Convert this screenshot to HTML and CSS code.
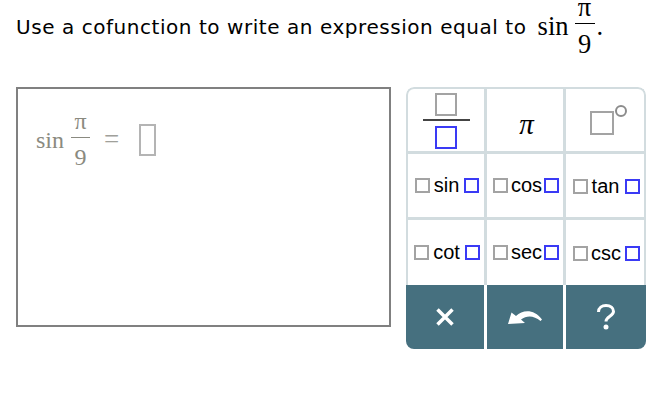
FILE: index.html
```html
<!DOCTYPE html>
<html lang="en">
<head>
    <meta charset="UTF-8">
    <title>Cofunction question</title>
    <link rel="stylesheet" href="styles.css">
</head>
<body>
    <div class="question">
        <span class="question-text">Use a cofunction to write an expression equal to</span>
        <span class="math math-question">
            <span class="fn">sin</span>
            <span class="frac">
                <span class="num">π</span>
                <span class="den">9</span>
            </span>
            <span class="dot">.</span>
        </span>
    </div>

    <div class="work">
        <div class="answer-box">
            <span class="math math-answer">
                <span class="fn">sin</span>
                <span class="frac">
                    <span class="num">π</span>
                    <span class="den">9</span>
                </span>
                <span class="equals">=</span>
                <span class="placeholder"></span>
            </span>
        </div>

        <div class="palette">
            <div class="keys">
                <button class="key">
                    <span class="key-frac">
                        <span class="box box-frac"></span>
                        <span class="key-bar"></span>
                        <span class="box box-frac blue"></span>
                    </span>
                </button>
                <button class="key key-pi">π</button>
                <button class="key">
                    <span class="key-degree">
                        <span class="box box-degree"></span>
                        <span class="degree-ring"></span>
                    </span>
                </button>

                <button class="key key-fn"><span class="box"></span><span class="fn-name spaced">sin</span><span class="box blue"></span></button>
                <button class="key key-fn"><span class="box"></span><span class="fn-name">cos</span><span class="box blue"></span></button>
                <button class="key key-fn low"><span class="box"></span><span class="fn-name wide">tan</span><span class="box blue"></span></button>

                <button class="key key-fn"><span class="box"></span><span class="fn-name spaced">cot</span><span class="box blue"></span></button>
                <button class="key key-fn"><span class="box"></span><span class="fn-name">sec</span><span class="box blue"></span></button>
                <button class="key key-fn low"><span class="box"></span><span class="fn-name roomy">csc</span><span class="box blue"></span></button>
            </div>

            <div class="actions">
                <button class="key-action" aria-label="Clear">
                    <svg width="20" height="20" viewBox="0 0 20 20"><path d="M2.500 2.500 L17.500 17.500 M17.500 2.500 L2.500 17.500" stroke="#fff" stroke-width="3.500" fill="none"/></svg>
                </button>
                <button class="key-action" aria-label="Undo">
                    <svg width="36" height="16" viewBox="0 0 36 16"><path d="M1 15 L4.500 3.500 L9 7 C16 0.500 27 0 35 10.500 L33.500 12 C27 6.500 20 6 14 10.500 L18 14 Z" fill="#fff"/></svg>
                </button>
                <button class="key-action" aria-label="Help">
                    <svg width="20" height="26" viewBox="0 0 20 26"><path d="M2.500 8 C2.500 3.500 6 1.500 10 1.500 C14.500 1.500 17.500 4 17.500 7.500 C17.500 12 10 12.500 10 17.500" stroke="#fff" stroke-width="3" fill="none"/><circle cx="10" cy="23" r="2.500" fill="#fff"/></svg>
                </button>
            </div>
        </div>
    </div>
</body>
</html>
```

FILE: styles.css
```css
* {
    margin: 0;
    padding: 0;
    box-sizing: border-box;
}

body {
    width: 663px;
    height: 417px;
    padding: 0 16px;
    background: white;
    color: #000;
    overflow: hidden;
}

.question {
    height: 87px;
    display: flex;
    align-items: flex-start;
    gap: 11px;
}

.question-text {
    font-family: "DejaVu Sans", Verdana, sans-serif;
    font-size: 20px;
    letter-spacing: 0.55px;
    line-height: 24px;
    margin-top: 15px;
    white-space: nowrap;
}

.math {
    font-family: "Liberation Serif", "Times New Roman", serif;
    display: flex;
    align-items: center;
}

.frac {
    display: flex;
    flex-direction: column;
    align-items: center;
    align-self: flex-start;
    margin-left: 6px;
    width: 20px;
}

.num {
    border-bottom: 1px solid currentColor;
    width: 100%;
    text-align: center;
}

.den {
    line-height: 22px;
}

/* question line */
.math-question {
    font-size: 26.5px;
    height: 52px;
}

.math-question .num {
    line-height: 14px;
    padding-bottom: 9px;
}

.math-question .den {
    padding-top: 9px;
}

.dot {
    margin-left: 2px;
}

/* answer box */
.math-answer {
    color: #8a8a80;
    font-size: 24px;
    height: 50px;
}

.math-answer .frac {
    margin-left: 7px;
    width: 19px;
}

.math-answer .num {
    line-height: 12px;
    padding-bottom: 10px;
}

.math-answer .den {
    padding-top: 8px;
}

.equals {
    margin: 0 0 2px 14px;
    font-size: 27px;
    color: #a0a09a;
}

.placeholder {
    width: 17px;
    height: 32px;
    margin-left: 20px;
    border: 2px solid #b4b4b4;
}

.work {
    display: flex;
    align-items: flex-start;
    gap: 15px;
}

.answer-box {
    width: 375px;
    height: 240px;
    border: 2px solid #808080;
    padding: 26px 0 0 18px;
}

/* key palette */
.palette {
    width: 240px;
    height: 262px;
    border-radius: 8px;
    overflow: hidden;
}

.keys {
    height: 198px;
    display: grid;
    grid-template-columns: 76px 76px 78px;
    grid-template-rows: 62px 63px 65px;
    gap: 3px;
    background: #d2dcdf;
    border: 2px solid #d2dcdf;
    border-bottom: 0;
    border-top-left-radius: 8px;
    border-top-right-radius: 8px;
}

.key {
    background: white;
    border: none;
    display: flex;
    align-items: center;
    justify-content: center;
    font-family: "Liberation Sans", Arial, sans-serif;
    color: #000;
}

.key:first-child {
    border-top-left-radius: 6px;
}

.key:nth-child(3) {
    border-top-right-radius: 6px;
}

.key-pi {
    font-family: "Liberation Serif", "Times New Roman", serif;
    font-size: 29px;
    font-style: italic;
    padding: 8px 0 0 3px;
}

.box {
    display: block;
    width: 15px;
    height: 15px;
    border: 2px solid #a3a3a3;
    flex: none;
}

.box.blue {
    border-color: #3a3af5;
}

.key-frac {
    display: flex;
    flex-direction: column;
    align-items: center;
    padding-top: 2px;
}

.box-frac {
    width: 22px;
    height: 23px;
}

.key-bar {
    width: 47px;
    height: 2px;
    background: #444;
    margin: 3px 0 5px;
}

.key-degree {
    display: flex;
    align-items: flex-start;
    margin-left: 6px;
}

.box-degree {
    width: 24px;
    height: 24px;
    margin-top: 6px;
}

.degree-ring {
    width: 12px;
    height: 12px;
    margin-left: 1px;
    border: 2px solid #8c8c8c;
    border-radius: 50%;
}

.key-fn {
    padding-left: 2px;
}

.key-fn.low {
    padding-left: 3px;
    padding-top: 2px;
}

.fn-name {
    font-size: 20px;
    margin: 0 2px 0 3px;
}

.fn-name.spaced {
    margin: 0 5px 0 4px;
}

.fn-name.wide {
    margin: 0 6px 0 4px;
}

.fn-name.roomy {
    margin: 0 4px 0 3px;
}

.actions {
    height: 64px;
    display: grid;
    grid-template-columns: 78px 76px 80px;
    column-gap: 3px;
    background: white;
}

.key-action {
    background: #46707f;
    border: none;
    display: flex;
    align-items: center;
    justify-content: center;
}
```
